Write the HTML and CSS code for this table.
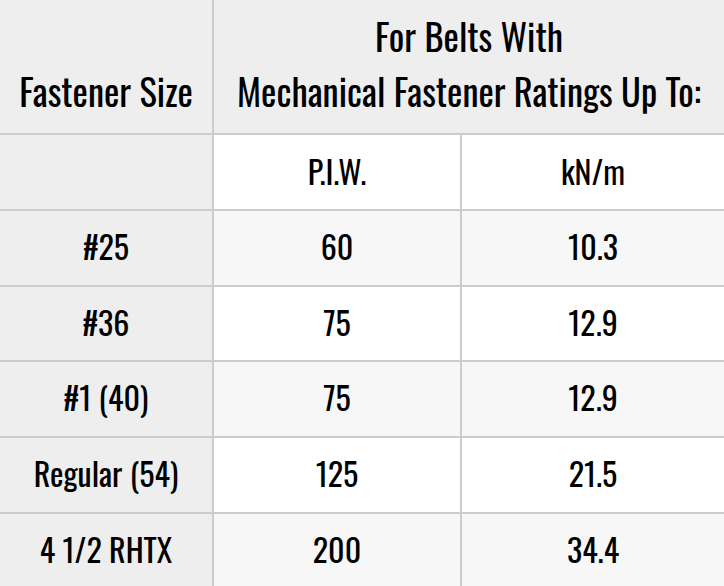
FILE: index.html
```html
<!DOCTYPE html>
<html>
<head>
<meta charset="utf-8">
<link rel="stylesheet" href="styles.css">
</head>
<body>
<table class="ratings">
  <colgroup>
    <col class="c1"><col class="c2"><col class="c3">
  </colgroup>
  <thead>
    <tr class="head">
      <th class="size-head">Fastener Size</th>
      <th colspan="2" class="rating-head">For Belts With<br>Mechanical Fastener Ratings Up To:</th>
    </tr>
    <tr class="units">
      <th class="size"></th>
      <th>P.I.W.</th>
      <th>kN/m</th>
    </tr>
  </thead>
  <tbody>
    <tr class="alt"><td class="size">#25</td><td>60</td><td>10.3</td></tr>
    <tr><td class="size">#36</td><td>75</td><td>12.9</td></tr>
    <tr class="alt"><td class="size">#1 (40)</td><td>75</td><td>12.9</td></tr>
    <tr><td class="size">Regular (54)</td><td>125</td><td>21.5</td></tr>
    <tr class="alt"><td class="size">4 1/2 RHTX</td><td>200</td><td>34.4</td></tr>
  </tbody>
</table>
</body>
</html>
```
FILE: styles.css
```css
html, body {
  margin: 0;
  padding: 0;
  background: #ffffff;
  overflow: hidden;
}
body {
  width: 724px;
  height: 586px;
  font-family: "Oswald", "Roboto", sans-serif;
  color: #000;
}
.ratings {
  width: 724px;
  border-collapse: collapse;
  table-layout: fixed;
}
.c1 { width: 213px; }
.c2 { width: 248px; }
.c3 { width: 263px; }
.ratings th,
.ratings td {
  border: 2px solid #cccccc;
  text-align: center;
  padding: 0;
  font-weight: normal;
}
.ratings tr:first-child th { border-top: none; }
.ratings th:first-child, .ratings td:first-child { border-left: none; }
.ratings th:last-child, .ratings td:last-child { border-right: none; }
.ratings tbody tr:last-child td { border-bottom: none; }

.head th {
  background: #eeeeee;
  height: 118px;
  font-size: 36.5px;
  line-height: 55px;
  vertical-align: bottom;
  padding-bottom: 15px;
}
.units th {
  height: 71px;
  font-size: 32px;
  line-height: 40px;
  padding-bottom: 3px;
  background: #ffffff;
}
.ratings td {
  height: 69.7px;
  font-size: 32px;
  line-height: 40px;
  padding-bottom: 4px;
  background: #ffffff;
}
.ratings tr.alt td { background: #f7f7f7; }
.ratings .size,
.ratings tr.alt td.size,
.units th.size { background: #eeeeee; }
```
